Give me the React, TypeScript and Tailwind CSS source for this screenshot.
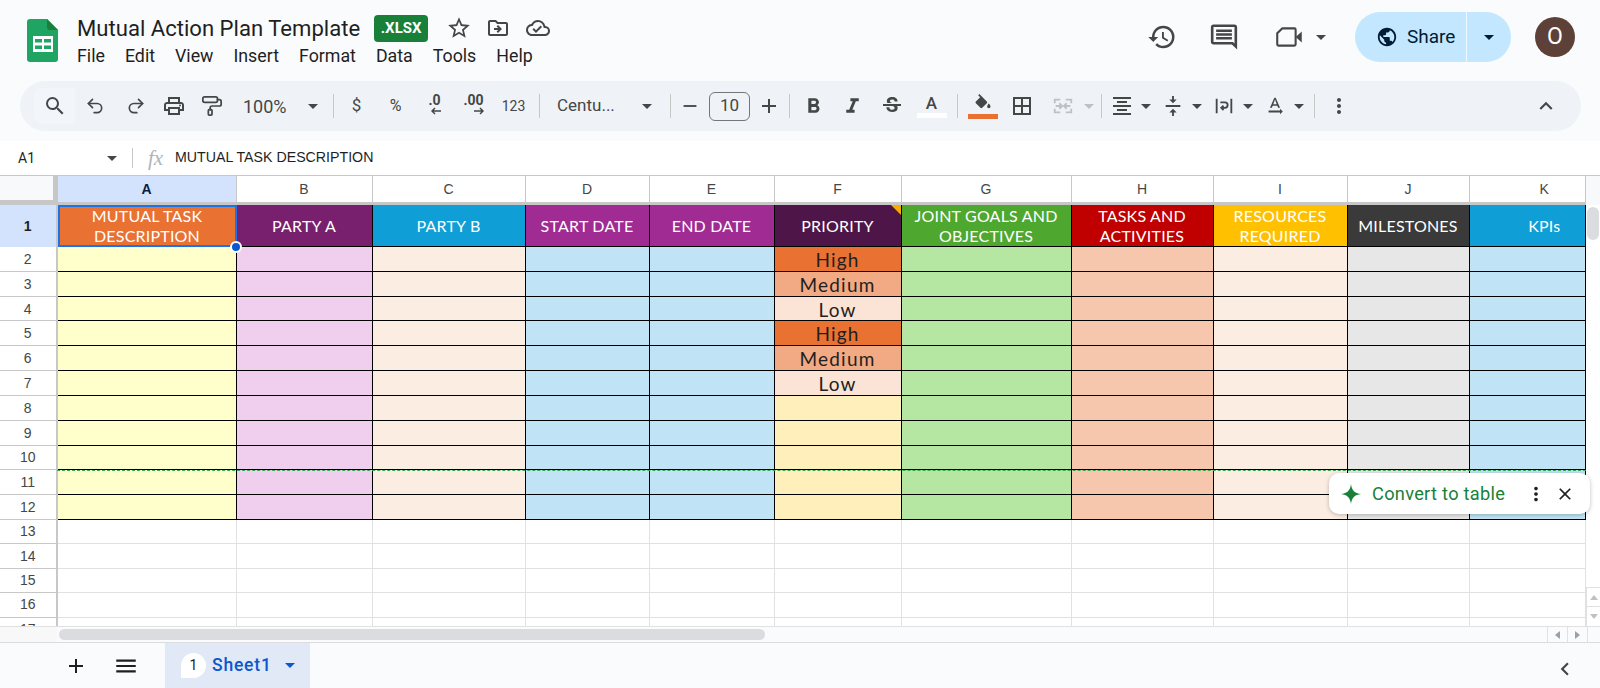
import { PaintRoller, Redo2, Undo2 } from "lucide-react";
import {
  MdAdd,
  MdBorderAll,
  MdChevronLeft,
  MdClose,
  MdExpandLess,
  MdFormatAlignCenter,
  MdFormatBold,
  MdFormatItalic,
  MdHistory,
  MdMenu,
  MdMoreVert,
  MdOutlineCloudDone,
  MdOutlineComment,
  MdOutlineDriveFileMove,
  MdOutlinePrint,
  MdPublic,
  MdRemove,
  MdSearch,
  MdStarBorder,
  MdStrikethroughS,
  MdTextRotationNone,
  MdVerticalAlignCenter,
} from "react-icons/md";

const menus = ["File", "Edit", "View", "Insert", "Format", "Data", "Tools", "Help"];

const columns = [
  { letter: "A", title: "MUTUAL TASK DESCRIPTION", head: "bg-[#e97132]", body: "bg-[#ffffcc]" },
  { letter: "B", title: "PARTY A", head: "bg-[#78206e]", body: "bg-[#f0cfee]" },
  { letter: "C", title: "PARTY B", head: "bg-[#0f9ed5]", body: "bg-[#fcede3]" },
  { letter: "D", title: "START DATE", head: "bg-[#a02b93]", body: "bg-[#c0e4f5]" },
  { letter: "E", title: "END DATE", head: "bg-[#a02b93]", body: "bg-[#c0e4f5]" },
  { letter: "F", title: "PRIORITY", head: "bg-[#4e1548]", body: "bg-[#fff0bb]" },
  { letter: "G", title: "JOINT GOALS AND OBJECTIVES", head: "bg-[#4ea72e]", body: "bg-[#b5e6a2]" },
  { letter: "H", title: "TASKS AND ACTIVITIES", head: "bg-[#c00000]", body: "bg-[#f6c6ad]" },
  { letter: "I", title: "RESOURCES REQUIRED", head: "bg-[#ffc000]", body: "bg-[#fcede3]" },
  { letter: "J", title: "MILESTONES", head: "bg-[#3a3a3a]", body: "bg-[#e7e7e7]" },
  { letter: "K", title: "KPIs", head: "bg-[#0f9ed5]", body: "bg-[#c0e4f5]" },
];

const priorities: Record<number, { label: string; color: string }> = {
  2: { label: "High", color: "bg-[#e97132]" },
  3: { label: "Medium", color: "bg-[#f2aa84]" },
  4: { label: "Low", color: "bg-[#fbe3d6]" },
  5: { label: "High", color: "bg-[#e97132]" },
  6: { label: "Medium", color: "bg-[#f2aa84]" },
  7: { label: "Low", color: "bg-[#fbe3d6]" },
};

const filledRows = [2, 3, 4, 5, 6, 7, 8, 9, 10, 11, 12];
const emptyRows = [13, 14, 15, 16, 17];

const Caret = ({ className = "fill-[#444746]" }: { className?: string }) => (
  <svg viewBox="0 0 10 5" className={`w-2.5 h-[5px] ${className}`}>
    <path d="M0 0h10L5 5z" />
  </svg>
);

const Tool = ({ width, children }: { width: string; children: React.ReactNode }) => (
  <div className={`${width} h-9 flex items-center justify-center shrink-0 text-[#444746]`}>{children}</div>
);

const Sep = ({ className = "" }: { className?: string }) => (
  <div className={`w-px h-6 bg-[#c7c7c7] shrink-0 ${className}`} />
);

const Pair = ({ children }: { children: React.ReactNode }) => (
  <div className="flex items-center w-[46px] shrink-0">
    <div className="w-8 flex justify-center text-[#444746]">{children}</div>
    <div className="w-3 ml-0.5 flex justify-center">
      <Caret />
    </div>
  </div>
);

const SheetsLogo = () => (
  <svg viewBox="0 0 31 43" className="w-[31px] h-[43px] shrink-0">
    <path d="M3 0h17l11 11v29a3 3 0 0 1-3 3H3a3 3 0 0 1-3-3V3a3 3 0 0 1 3-3z" fill="#1fa463" />
    <path d="M20 0l11 11h-8a3 3 0 0 1-3-3z" fill="#188038" />
    <path d="M6 17h20v16H6z" fill="#fff" />
    <path d="M8 20h7v3.5H8zM17 20h7v3.5h-7zM8 26.500h7V30H8zM17 26.500h7V30h-7z" fill="#1fa463" />
  </svg>
);

const MeetIcon = () => (
  <svg viewBox="2 4 22 16" className="w-[27px] h-[20px] fill-none stroke-[#444746] stroke-[1.7]">
    <path d="M7 5h10a1 1 0 0 1 1 1v12a1 1 0 0 1-1 1H4a1 1 0 0 1-1-1V9z" strokeLinejoin="round" />
    <path d="M18 12l5-4.500v9z" fill="#444746" stroke="none" />
  </svg>
);

const WrapIcon = () => (
  <svg viewBox="0 0 24 24" className="w-[22px] h-[22px] fill-none stroke-[#444746] stroke-2">
    <path d="M4 4v16M20 4v16M8 8h5a3 3 0 0 1 0 6H9M11.500 11.500L9 14l2.500 2.500" />
  </svg>
);

const MergeIcon = () => (
  <svg viewBox="0 0 24 24" className="w-[22px] h-[22px] fill-none stroke-[#bdc1c6] stroke-2">
    <path d="M9 5H3v4M3 15v4h6M15 5h6v4M21 15v4h-6M4 12h6M8 9l3 3-3 3M20 12h-6M16 9l-3 3 3 3" />
  </svg>
);

const BucketIcon = () => (
  <svg viewBox="0 0 24 24" className="w-[22px] h-[20px] fill-[#444746]">
    <path d="M16.560 8.940L7.620 0 6.210 1.410l2.380 2.380-5.150 5.150c-.59.59-.59 1.540 0 2.120l5.500 5.500c.29.29.68.44 1.060.44s.77-.15 1.060-.44l5.500-5.500c.59-.58.59-1.530 0-2.120zM19 11.500s-2 2.170-2 3.500c0 1.100.9 2 2 2s2-.9 2-2c0-1.330-2-3.500-2-3.500z" />
  </svg>
);

const DecimalIcon = ({ label, flip }: { label: string; flip?: boolean }) => (
  <div className="flex flex-col items-end leading-none">
    <span className="text-[14px] font-bold leading-[14px] -mt-1">{label}</span>
    <svg viewBox="0 0 10 8" className={`w-2.5 h-2 fill-none stroke-[#444746] stroke-[1.5] ${flip ? "" : "rotate-180"}`}>
      <path d="M0 4h9M6 1l3 3-3 3" />
    </svg>
  </div>
);

const Sparkle = () => (
  <svg viewBox="0 0 24 24" className="w-[22px] h-[22px] fill-[#188038]">
    <path d="M12 1c.8 7 4 10.200 11 11-7 .8-10.200 4-11 11-.8-7-4-10.200-11-11 7-.8 10.200-4 11-11z" />
  </svg>
);

const TitleBar = () => (
  <div className="h-[81px] flex items-start relative">
    <div className="ml-[27px] mt-[19px]">
      <SheetsLogo />
    </div>
    <div className="ml-[19px] mt-[13px] flex flex-col">
      <div className="flex items-center h-[30px]">
        <span className="text-[22.100px] text-[#1f1f1f] leading-none">Mutual Action Plan Template</span>
        <span className="ml-[14px] w-[54px] h-[27px] bg-[#188038] rounded text-white text-[15px] font-bold flex items-center justify-center">
          .XLSX
        </span>
        <MdStarBorder className="ml-[18px] text-[#444746]" size={26} />
        <MdOutlineDriveFileMove className="ml-[14px] text-[#444746]" size={24} />
        <MdOutlineCloudDone className="ml-[16px] text-[#444746]" size={24} />
      </div>
      <div className="flex gap-5 text-[17.800px] leading-[26px] text-[#1f1f1f]">
        {menus.map((m) => (
          <span key={m}>{m}</span>
        ))}
      </div>
    </div>
    <div className="ml-auto flex items-center h-[50px] mt-3 pr-[25px]">
      <MdHistory size={30} className="text-[#444746] mr-[32px]" />
      <MdOutlineComment size={30} className="text-[#444746] mr-[37px] scale-x-[1.05]" />
      <MeetIcon />
      <div className="ml-[13px] mr-[29px]">
        <Caret />
      </div>
      <div className="flex w-[156px] h-[50px] bg-[#c2e7ff] rounded-full">
        <div className="w-[112px] flex items-center pl-[21px] gap-[9px] border-r border-[#f0f9ff]">
          <MdPublic size={22} className="text-[#001d35]" />
          <span className="text-[19px] text-[#001d35]">Share</span>
        </div>
        <div className="flex-1 flex items-center justify-center">
          <Caret className="fill-[#001d35]" />
        </div>
      </div>
      <div className="ml-6 w-10 h-10 rounded-full bg-[#5d4037] text-white text-[23px] flex items-center justify-center">
        O
      </div>
    </div>
  </div>
);

const Toolbar = () => (
  <div className="mx-[20px] w-[1561px] h-[50px] bg-[#eff3f8] rounded-full flex items-center pl-[14px] pr-[15px]">
    <div className="w-[41px] h-9 -mr-[3px] flex items-center justify-center bg-[#f2f5fa] rounded-l-lg text-[#444746]">
      <MdSearch size={24} />
    </div>
    <Tool width="w-[46px]">
      <Undo2 size={20} strokeWidth={2} />
    </Tool>
    <Tool width="w-[36px]">
      <Redo2 size={20} strokeWidth={2} />
    </Tool>
    <Tool width="w-[39px]">
      <MdOutlinePrint size={24} />
    </Tool>
    <Tool width="w-[38px]">
      <PaintRoller size={22} strokeWidth={1.9} />
    </Tool>
    <div className="w-[102px] h-9 flex items-center pl-3 text-[#444746] text-[18px] shrink-0">
      <span className="w-[65px]">100%</span>
      <Caret />
    </div>
    <Sep />
    <div className="ml-[3px] flex">
      <Tool width="w-[39px]">
        <span className="text-[17px]">$</span>
      </Tool>
      <Tool width="w-[39px]">
        <span className="text-[16px]">%</span>
      </Tool>
      <Tool width="w-[39px]">
        <DecimalIcon label=".0" />
      </Tool>
      <Tool width="w-[39px]">
        <DecimalIcon label=".00" flip />
      </Tool>
      <Tool width="w-[41px]">
        <span className="text-[14px]">123</span>
      </Tool>
    </div>
    <Sep className="ml-[5px]" />
    <div className="w-[130px] h-9 flex items-center pl-[17px] text-[#444746] text-[17px] shrink-0">
      <span className="w-[85px]">Centu...</span>
      <Caret />
    </div>
    <Sep />
    <Tool width="w-[38px]">
      <MdRemove size={22} />
    </Tool>
    <div className="w-[41px] h-[29px] border border-[#747775] rounded-md flex items-center justify-center text-[17px] text-[#444746] shrink-0">
      10
    </div>
    <Tool width="w-[37px]">
      <MdAdd size={24} />
    </Tool>
    <Sep className="ml-[2px]" />
    <div className="ml-[4px] flex">
      <Tool width="w-[39px]">
        <MdFormatBold size={25} />
      </Tool>
      <Tool width="w-[39px]">
        <MdFormatItalic size={25} />
      </Tool>
      <Tool width="w-[39px]">
        <MdStrikethroughS size={24} />
      </Tool>
      <Tool width="w-[41px]">
        <div className="flex flex-col items-center w-[30px]">
          <span className="text-[17px] leading-[17px] font-medium">A</span>
          <div className="w-full h-[5px] bg-white mt-px" />
        </div>
      </Tool>
    </div>
    <Sep className="ml-[5px]" />
    <div className="ml-[5px] flex">
      <Tool width="w-[39px]">
        <div className="flex flex-col items-center w-[30px]">
          <BucketIcon />
          <div className="w-full h-[5px] bg-[#e97132]" />
        </div>
      </Tool>
      <Tool width="w-[40px]">
        <MdBorderAll size={24} />
      </Tool>
      <Tool width="w-[41px]">
        <MergeIcon />
      </Tool>
      <div className="w-3 h-9 flex items-center justify-center">
        <Caret className="fill-[#bdc1c6]" />
      </div>
    </div>
    <Sep className="ml-[6px]" />
    <div className="ml-[4px] flex gap-[5px]">
      <Pair>
        <MdFormatAlignCenter size={24} />
      </Pair>
      <Pair>
        <MdVerticalAlignCenter size={22} />
      </Pair>
      <Pair>
        <WrapIcon />
      </Pair>
      <Pair>
        <MdTextRotationNone size={22} />
      </Pair>
    </div>
    <Sep className="ml-[9px]" />
    <div className="ml-[4px]">
      <Tool width="w-10">
        <MdMoreVert size={24} />
      </Tool>
    </div>
    <div className="ml-auto">
      <Tool width="w-10">
        <MdExpandLess size={26} />
      </Tool>
    </div>
  </div>
);

const FormulaBar = () => (
  <div className="h-[34px] bg-white flex items-center text-[14px] text-[#1f1f1f]">
    <span className="ml-[18px] w-[89px]">A1</span>
    <Caret />
    <div className="ml-[15px] w-px h-5 bg-[#c7c7c7]" />
    <span className="ml-[15px] w-[28px] text-[#b0b3b8] text-[21px] italic leading-none font-['Liberation_Serif',serif]">
      fx
    </span>
    <span className="ml-[-1px] text-[14.200px] font-['Liberation_Sans',sans-serif]">MUTUAL TASK DESCRIPTION</span>
  </div>
);

const Grid = () => (
  <div className="grid grid-cols-[57.500px_179px_136px_153px_124px_125px_127px_170px_142px_134px_122px_116.500px] grid-rows-[30px_42px_repeat(11,24.820px)_repeat(5,24.400px)] h-[451px] overflow-hidden font-['Liberation_Sans',sans-serif]">
    {/* top corner and column letters */}
    <div className="bg-[#f8f9fa] border-t border-[#c7c7c7] border-r-[5px] border-b-[5px] border-r-[#c7c7c7] border-b-[#c7c7c7]" />
    {columns.map((c, i) => (
      <div
        key={c.letter}
        className={`flex items-center justify-center text-[14px] border-t border-t-[#c7c7c7] border-r border-r-[#c7c7c7] border-b-[3px] border-b-[#c7c7c7] ${
          i === 0 ? "bg-[#d3e3fd] font-bold text-[#0b1c3d]" : "bg-white text-[#444746]"
        } ${c.letter === "K" ? "pl-[34px]" : ""}`}
      >
        {c.letter}
      </div>
    ))}

    {/* header row */}
    <div className="bg-[#d3e3fd] border-r-2 border-[#c7c7c7] flex items-center justify-center text-[14px] font-bold text-[#1f1f1f]">
      1
    </div>
    {columns.map((c) => (
      <div
        key={c.letter}
        className={`${c.head} relative flex items-center justify-center text-center text-white text-[16px] leading-[20px] tracking-[0.2px] font-['Lato',sans-serif] ${
          c.letter === "A" ? "border-2 border-[#1a73e8] px-0.5" : "border-r border-b border-black px-0"
        } ${c.letter === "K" ? "pl-[34px]" : ""}`}
      >
        {c.title}
        {c.letter === "F" && (
          <div className="absolute top-0 right-0 w-0 h-0 border-l-[10px] border-t-[10px] border-l-transparent border-t-[#f9ab00]" />
        )}
      </div>
    ))}

    {/* filled rows */}
    {filledRows.map((r) => (
      <div key={r} className="contents">
        <div className="bg-white border-r-2 border-r-[#c7c7c7] border-b border-b-[#c7c7c7] flex items-center justify-center pt-px text-[14px] text-[#444746]">
          {r}
        </div>
        {columns.map((c) => {
          const p = c.letter === "F" ? priorities[r] : undefined;
          return (
            <div
              key={c.letter}
              className={`${p ? p.color : c.body} border-r border-b border-black flex items-center justify-center pt-px text-[19px] leading-none tracking-[1.200px] text-[#1f1f1f] font-['Lato',sans-serif]`}
            >
              {p?.label}
            </div>
          );
        })}
      </div>
    ))}

    {/* empty rows */}
    {emptyRows.map((r) => (
      <div key={r} className="contents">
        <div className="bg-white border-r-2 border-r-[#c7c7c7] border-b border-b-[#c7c7c7] flex items-center justify-center text-[14px] text-[#444746]">
          {r}
        </div>
        {columns.map((c) => (
          <div key={c.letter} className="bg-white border-r border-b border-[#e1e1e1]" />
        ))}
      </div>
    ))}
  </div>
);

const RightRail = () => (
  <div className="w-[14px] h-[451px] flex flex-col bg-white">
    <div className="h-[30px] bg-[#f8f9fa] border-t border-[#c7c7c7]" />
    <div className="mt-[2px] mx-[1px] h-[33px] bg-[#dadce0] rounded-full" />
    <div className="mt-auto h-[19px] border-t border-l border-[#e1e1e1] flex items-center justify-center">
      <svg viewBox="0 0 8 5" className="w-2 h-[5px] fill-[#bdc1c6]">
        <path d="M0 5h8L4 0z" />
      </svg>
    </div>
    <div className="h-[20px] border-t border-l border-[#e1e1e1] flex items-center justify-center">
      <svg viewBox="0 0 8 5" className="w-2 h-[5px] fill-[#bdc1c6]">
        <path d="M0 0h8L4 5z" />
      </svg>
    </div>
  </div>
);

const ConvertChip = () => (
  <div className="absolute top-[298px] left-[1329px] w-[261px] h-[41px] bg-white rounded-[10px] shadow-[0_1px_4px_rgba(0,0,0,0.25)] flex items-center pl-[11px]">
    <Sparkle />
    <span className="ml-[10px] w-[137px] text-[18.200px] text-[#188038] whitespace-nowrap tracking-[0.3px]">
      Convert to table
    </span>
    <MdMoreVert size={22} className="ml-[16px] text-[#1f1f1f]" />
    <MdClose size={20} className="ml-[8px] text-[#1f1f1f]" />
  </div>
);

const HScroll = () => (
  <div className="h-[16px] flex items-stretch border-t border-[#e1e1e1]">
    <div className="w-[57px] bg-[#f8f8f8]" />
    <div className="w-[1490px] flex items-center pl-[2px]">
      <div className="w-[706px] h-[11px] bg-[#dadce0] rounded-full" />
    </div>
    <div className="w-[20px] border-l border-[#e1e1e1] flex items-center justify-center">
      <svg viewBox="0 0 5 8" className="w-[5px] h-2 fill-[#9aa0a6]">
        <path d="M5 0v8L0 4z" />
      </svg>
    </div>
    <div className="w-[20px] border-l border-[#e1e1e1] flex items-center justify-center">
      <svg viewBox="0 0 5 8" className="w-[5px] h-2 fill-[#9aa0a6]">
        <path d="M0 0v8l5-4z" />
      </svg>
    </div>
    <div className="flex-1 border-l border-[#e1e1e1]" />
  </div>
);

const TabBar = () => (
  <div className="h-[46px] bg-[#f9fbfd] border-t border-[#dadce0] flex items-stretch">
    <div className="w-[165px] flex items-center pl-[64px] text-[#1f1f1f]">
      <MdAdd size={24} />
      <MdMenu size={26} className="ml-[25px]" />
    </div>
    <div className="w-[145px] bg-[#e1e9f7] flex items-center pl-4">
      <div className="w-[25px] h-[25px] bg-white rounded-full rounded-bl-none flex items-center justify-center text-[14px] text-[#1f1f1f]">
        1
      </div>
      <span className="ml-[6px] text-[17.500px] font-medium tracking-[0.8px] text-[#0b57d0]">Sheet1</span>
      <div className="ml-[13px]">
        <Caret className="fill-[#0b57d0]" />
      </div>
    </div>
    <div className="ml-auto flex items-center pr-[22px] pt-[6px]">
      <MdChevronLeft size={26} className="text-[#444746]" />
    </div>
  </div>
);

export default function App() {
  return (
    <div className="w-screen h-screen overflow-hidden bg-[#f9fbfd] font-['Roboto',sans-serif]">
      <TitleBar />
      <Toolbar />
      <div className="h-[10px]" />
      <FormulaBar />
      <div className="relative flex bg-white">
        <div className="w-[1586px]">
          <Grid />
        </div>
        <RightRail />
        {/* fill handle on the selected cell */}
        <div className="absolute top-[66px] left-[230px] w-3 h-3 rounded-full bg-[#0b57d0] border-2 border-white" />
        {/* dashed range hint */}
        <div className="absolute top-[295px] left-[57px] w-[1529px] border-t border-dashed border-[#34a853]" />
        <ConvertChip />
      </div>
      <HScroll />
      <TabBar />
    </div>
  );
}
